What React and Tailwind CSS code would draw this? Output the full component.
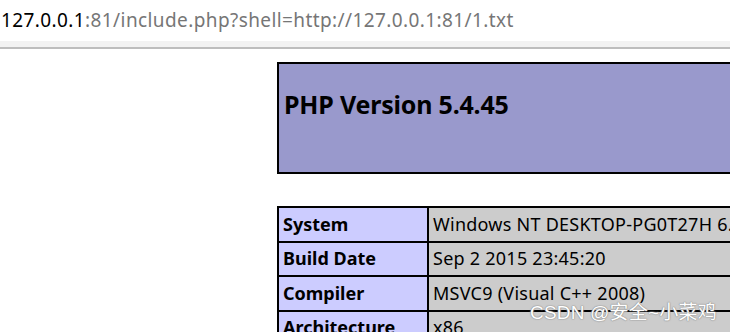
export default function App() {
  const rows = [
    ["System", "Windows NT DESKTOP-PG0T27H 6.2 build 9200 (Windows 8 Home Premium Edition) i586"],
    ["Build Date", "Sep 2 2015 23:45:20"],
    ["Compiler", "MSVC9 (Visual C++ 2008)"],
    ["Architecture", "x86"],
  ];
  return (
    <div className="relative w-[730px] h-[332px] overflow-hidden bg-white" style={{ fontFamily: '"Noto Sans", "Open Sans", sans-serif' }}>
      <div className="h-[41px] bg-white flex items-center pl-[1px] text-[19px] tracking-[0.4px] whitespace-nowrap">
        <span className="text-black">127.0.0.1</span>
        <span className="text-[#767676]">:81/include.php?shell=http://127.0.0.1:81/1.txt</span>
      </div>
      <div className="h-[6px] bg-[#f2f2f2]" />
      <div className="h-[2px] bg-[#bdbdbd]" />
      <div className="pl-[277px] pt-[13px]">
        <div className="w-[600px] h-[112px] border-2 border-black bg-[#9999cc] pl-[5px] pt-[22px]">
          <h1 className="text-[25px] font-bold text-black leading-[36px] tracking-[-0.2px]">PHP Version 5.4.45</h1>
        </div>
        <div className="mt-[32px] w-[600px] border-t-2 border-l-2 border-black">
          {rows.map(([k, v]) => (
            <div key={k} className="flex h-[34.5px] border-b-2 border-black">
              <div className="w-[150px] shrink-0 bg-[#ccccff] border-r-2 border-black pl-[4px] flex items-center text-[18px] font-bold text-black">
                {k}
              </div>
              <div className="flex-1 bg-[#cccccc] pl-[4px] flex items-center text-[18px] tracking-[0.25px] text-black whitespace-nowrap">
                {v}
              </div>
            </div>
          ))}
        </div>
      </div>
      <div
        className="absolute left-[530px] top-[299px] text-[19px] text-white whitespace-nowrap tracking-[0.2px]"
        style={{ fontFamily: '"Liberation Sans", "Noto Sans CJK SC", sans-serif', textShadow: "0 0 1px #888, 0 0 1px #888, 0 0 2px #aaa" }}
      >
        CSDN @安全~小菜鸡
      </div>
    </div>
  );
}
